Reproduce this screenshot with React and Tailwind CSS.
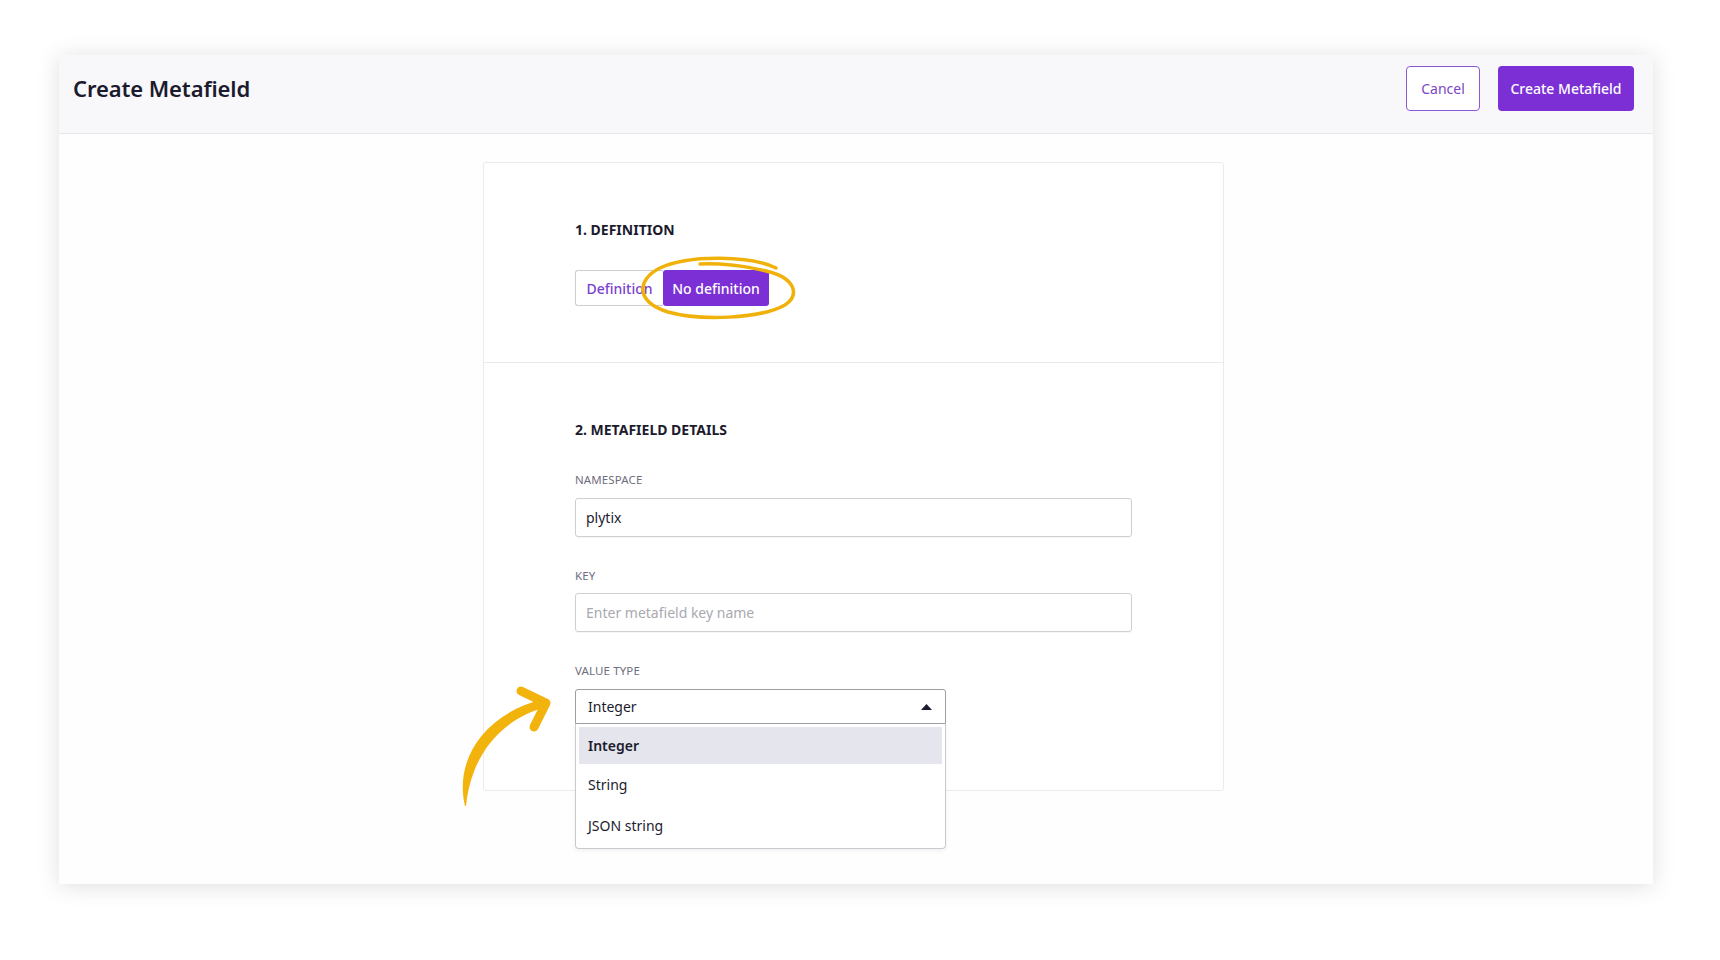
import React from "react";

function Label({ children }) {
  return (
    <div className="text-[11.5px] leading-4 uppercase text-[#6e6e7e] tracking-[0.01em]">
      {children}
    </div>
  );
}

export default function App() {
  return (
    <div className="relative w-[1720px] h-[960px] bg-white font-['Noto_Sans',sans-serif] text-[#1c1b2e] overflow-hidden">
      <div className="pt-[55px] pl-[59px]">
        <div className="w-[1594px] h-[829px] bg-[#fefefe] shadow-[0_2px_22px_rgba(0,0,0,0.13)] flex flex-col">
          {/* Header */}
          <div className="h-[79px] bg-[#f8f8fb] border-b border-[#e6e6ec] flex items-start justify-between pt-[11px] pl-[14px] pr-[19px]">
            <h1 className="text-[22px] leading-[30px] font-semibold tracking-[-0.1px] text-[#1c1b2e] mt-[7px]">
              Create Metafield
            </h1>
            <div className="flex items-center gap-[18px]">
              <button className="h-[45px] w-[74px] border border-[#8d58d4] rounded-[4px] bg-white text-[14px] text-[#7a47c4]">
                Cancel
              </button>
              <button className="h-[45px] w-[136px] rounded-[4px] bg-[#7b2fd4] text-[14px] font-medium text-white">
                Create Metafield
              </button>
            </div>
          </div>

          {/* Body */}
          <div className="pt-[28px] pl-[424px]">
            <div className="w-[741px] border border-[#ebebeb] rounded-[3px] bg-white">
              {/* Section 1 */}
              <div className="px-[91px] pt-[57px] pb-[56px] border-b border-[#ebebeb]">
                <div className="text-[14px] leading-5 font-bold text-[#1c1b2e]">1. DEFINITION</div>
                <div className="mt-[30px] flex">
                  <button className="h-[36px] w-[88px] border border-[#cdcdd3] border-r-0 rounded-l-[3px] bg-white text-[14px] font-medium text-[#7b3fcf]">
                    Definition
                  </button>
                  <button className="h-[36px] w-[106px] rounded-[3px] bg-[#7b2fd4] text-[14px] font-medium text-white">
                    No definition
                  </button>
                </div>
              </div>

              {/* Section 2 */}
              <div className="px-[91px] pt-[57px] pb-[66px]">
                <div className="text-[14px] leading-5 font-bold text-[#1c1b2e]">2. METAFIELD DETAILS</div>

                <div className="mt-[32px]">
                  <Label>Namespace</Label>
                  <div className="mt-[10px] h-[39px] border border-[#cfcfd3] rounded-[3px] flex items-center pl-[10px] text-[14px] text-[#1c1b2e] shadow-[0_1px_1px_rgba(0,0,0,0.04)]">
                    plytix
                  </div>
                </div>

                <div className="mt-[31px]">
                  <Label>Key</Label>
                  <div className="mt-[9px] h-[39px] border border-[#cfcfd3] rounded-[3px] flex items-center pl-[10px] text-[14px] text-[#a9a9b0] shadow-[0_1px_1px_rgba(0,0,0,0.04)]">
                    Enter metafield key name
                  </div>
                </div>

                <div className="mt-[31px]">
                  <Label>Value type</Label>
                  <div className="relative mt-[10px] w-[371px]">
                    <div className="h-[35px] border border-[#9e9ea4] rounded-t-[3px] flex items-center justify-between pl-[12px] pr-[13px] text-[14px] text-[#1c1b2e] bg-white">
                      <span>Integer</span>
                      <svg width="11" height="6" viewBox="0 0 11 6">
                        <path d="M0 6 L5.5 0 L11 6 Z" fill="#1c1b2e" />
                      </svg>
                    </div>
                    <div className="absolute left-0 top-full w-[371px] border border-t-0 border-[#c9c9cf] rounded-b-[4px] bg-white pt-[3px] px-[3px] pb-[3px] shadow-[0_2px_4px_rgba(0,0,0,0.05)] z-10">
                      <div className="h-[37px] bg-[#e5e5ed] flex items-center pl-[9px] text-[14px] font-semibold text-[#1c1b2e]">
                        Integer
                      </div>
                      <div className="h-[41px] flex items-center pl-[9px] text-[14px] text-[#1c1b2e]">
                        String
                      </div>
                      <div className="h-[40px] flex items-center pl-[9px] text-[14px] text-[#1c1b2e]">
                        JSON string
                      </div>
                    </div>
                  </div>
                </div>
              </div>
            </div>
          </div>
        </div>
      </div>

      {/* Annotations */}
      <svg
        className="absolute left-0 top-0 pointer-events-none z-20"
        width="1720"
        height="960"
        viewBox="0 0 1720 960"
      >
        {/* Ellipse around "No definition" */}
        <path
          d="M776 268 C 752 256, 690 254, 660 268 C 636 280, 636 302, 668 312 C 700 321, 760 319, 785 305 C 800 295, 795 279, 770 272 C 745 265, 715 263, 700 264"
          fill="none"
          stroke="#f0b20a"
          strokeWidth="3.5"
          strokeLinecap="round"
        />
        {/* Curved arrow */}
        <path
          d="M465 806 C 455 765, 478 716, 543 699 L 546 707 C 492 722, 470 765, 466 806 Z"
          fill="#f2b30c"
        />
        <path
          d="M521 691 L 546 703 L 534 727"
          fill="none"
          stroke="#f2b30c"
          strokeWidth="9"
          strokeLinecap="round"
          strokeLinejoin="round"
        />
      </svg>
    </div>
  );
}
